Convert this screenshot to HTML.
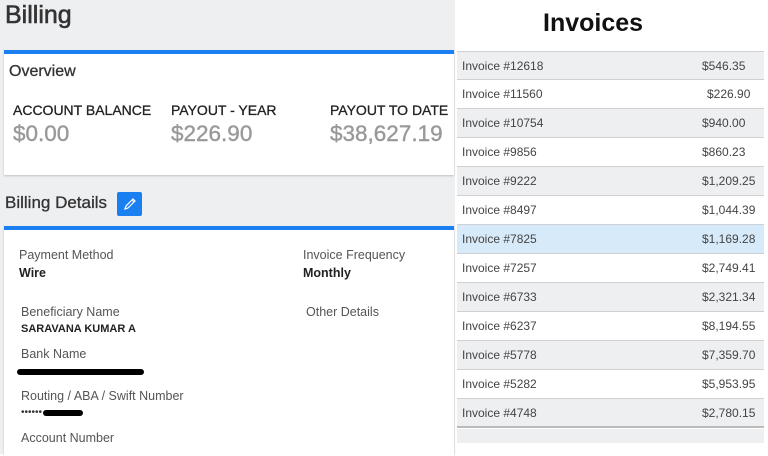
<!DOCTYPE html>
<html><head><style>
*{margin:0;padding:0;box-sizing:border-box}
body{width:768px;height:454px;overflow:hidden;background:#fff;font-family:"Liberation Sans",Arial,sans-serif;position:relative}
.left{position:absolute;left:0;top:0;width:455px;height:454px;background:#eeeff1}
.a{position:absolute;white-space:nowrap}
.card{position:absolute;left:4px;width:450px;background:#fff;border-top:4px solid #1a7ff0;box-shadow:0 1px 2px rgba(0,0,0,.2)}
.lbl{font-size:14px;color:#222;-webkit-text-stroke:0.3px #222}
.big{font-size:22.5px;color:#999;-webkit-text-stroke:0.4px #999}
.dl{font-size:12.5px;color:#555}
.dv{font-size:12.5px;color:#222;font-weight:bold}
.row{position:absolute;left:457px;width:307px;height:29px;border-bottom:1px solid #cfd0d3;font-size:12px;color:#444}
.row span{position:absolute;top:7px}
.g{background:#eeeff1}
.h{background:#d7eaf9}
</style></head><body>
<div class="left">
<div class="a" style="left:5px;top:1px;font-size:25px;color:#333;-webkit-text-stroke:0.6px #333">Billing</div>
<div class="card" style="top:50px;height:125px"></div>
<div class="a" style="left:9px;top:63px;font-size:16px;color:#333;-webkit-text-stroke:0.3px #333">Overview</div>
<div class="a lbl" style="left:13px;top:102px">ACCOUNT BALANCE</div>
<div class="a lbl" style="left:171px;top:102px">PAYOUT - YEAR</div>
<div class="a lbl" style="left:330px;top:102px">PAYOUT TO DATE</div>
<div class="a big" style="left:13px;top:121px">$0.00</div>
<div class="a big" style="left:171px;top:121px">$226.90</div>
<div class="a big" style="left:330px;top:121px">$38,627.19</div>
<div class="a" style="left:5px;top:193px;font-size:17px;color:#333;-webkit-text-stroke:0.3px #333">Billing Details</div>
<div class="a" style="left:117px;top:192px;width:25px;height:24px;background:#1a7ff0;border-radius:2px">
<svg width="25" height="24" viewBox="0 0 25 24"><path d="M8 17 L9 14 L16 7 L18 9 L11 16 Z M15 8 L17 10" fill="none" stroke="#fff" stroke-width="1.2"/></svg></div>
<div class="card" style="top:226px;height:230px"></div>
<div class="a dl" style="left:19px;top:248px">Payment Method</div>
<div class="a dv" style="left:19px;top:266px">Wire</div>
<div class="a dl" style="left:303px;top:248px">Invoice Frequency</div>
<div class="a dv" style="left:303px;top:266px">Monthly</div>
<div class="a dl" style="left:21px;top:305px">Beneficiary Name</div>
<div class="a dv" style="left:21px;top:323px;font-size:11px">SARAVANA KUMAR A</div>
<div class="a dl" style="left:306px;top:305px">Other Details</div>
<div class="a dl" style="left:21px;top:347px">Bank Name</div>
<div class="a" style="left:17px;top:369px;width:127px;height:6px;background:#000;border-radius:3px"></div>
<div class="a dl" style="left:21px;top:389px">Routing / ABA / Swift Number</div>
<div class="a" style="left:21px;top:407px;font-size:10px;color:#333">••••••</div>
<div class="a" style="left:43px;top:410px;width:40px;height:6px;background:#000;border-radius:3px"></div>
<div class="a dl" style="left:21px;top:431px">Account Number</div>
</div>
<div class="a" style="left:543px;top:9px;font-size:25px;font-weight:bold;color:#111">Invoices</div>
<div class="row g" style="top:51px;border-top:1px solid #cfd0d3"><span style="left:5px">Invoice #12618</span><span style="left:245px">$546.35</span></div>
<div class="row" style="top:80px"><span style="left:5px">Invoice #11560</span><span style="left:250px">$226.90</span></div>
<div class="row g" style="top:109px"><span style="left:5px">Invoice #10754</span><span style="left:245px">$940.00</span></div>
<div class="row" style="top:138px"><span style="left:5px">Invoice #9856</span><span style="left:245px">$860.23</span></div>
<div class="row g" style="top:167px"><span style="left:5px">Invoice #9222</span><span style="left:245px">$1,209.25</span></div>
<div class="row" style="top:196px"><span style="left:5px">Invoice #8497</span><span style="left:245px">$1,044.39</span></div>
<div class="row h" style="top:225px"><span style="left:5px">Invoice #7825</span><span style="left:245px">$1,169.28</span></div>
<div class="row" style="top:254px"><span style="left:5px">Invoice #7257</span><span style="left:245px">$2,749.41</span></div>
<div class="row g" style="top:283px"><span style="left:5px">Invoice #6733</span><span style="left:245px">$2,321.34</span></div>
<div class="row" style="top:312px"><span style="left:5px">Invoice #6237</span><span style="left:245px">$8,194.55</span></div>
<div class="row g" style="top:341px"><span style="left:5px">Invoice #5778</span><span style="left:245px">$7,359.70</span></div>
<div class="row" style="top:370px"><span style="left:5px">Invoice #5282</span><span style="left:245px">$5,953.95</span></div>
<div class="row g" style="top:399px;border-bottom:2px solid #bbb"><span style="left:5px">Invoice #4748</span><span style="left:245px">$2,780.15</span></div>
<div class="a" style="left:457px;top:429px;width:307px;height:14px;background:#eeeff1"></div>
</body></html>
